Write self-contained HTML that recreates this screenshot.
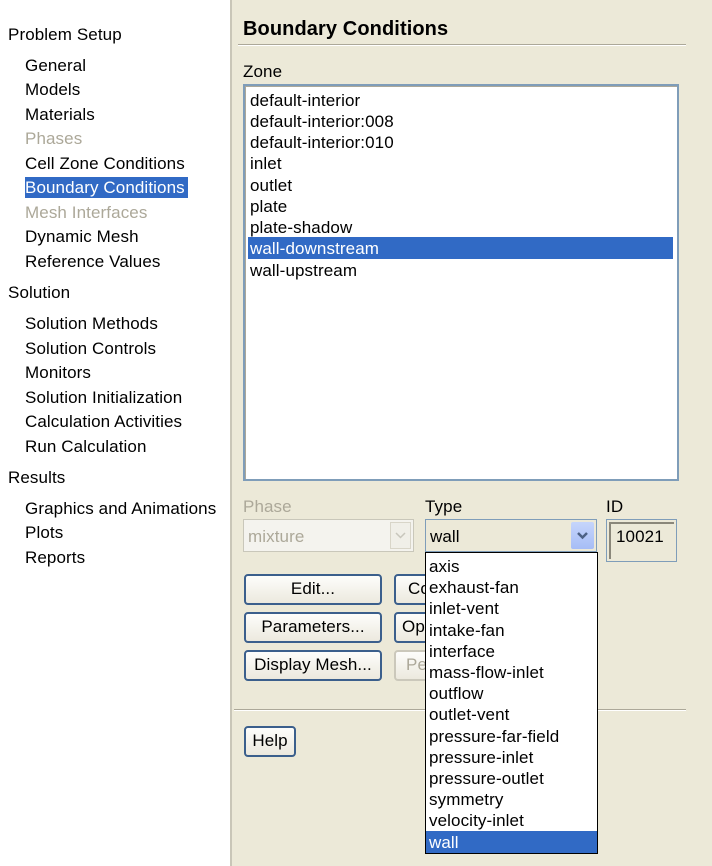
<!DOCTYPE html>
<html><head><style>
*{margin:0;padding:0;box-sizing:border-box}
body{width:712px;height:866px;overflow:hidden;background:#ECE9D8;font-family:"Liberation Sans",sans-serif;font-size:17px;letter-spacing:0.1px;color:#000;position:relative}
.a{position:absolute;white-space:nowrap}
#left{position:absolute;left:0;top:0;width:232px;height:866px;background:#fff;border-right:2px solid #c9c6b8}
.n{position:absolute;left:25px;line-height:21px;white-space:nowrap}
.h{left:8px}
.g{color:#aca899}
.li{position:absolute;left:250px;line-height:21px}
.btn{position:absolute;height:31px;border:2px solid #3b5f8c;border-radius:4px;background:linear-gradient(#fdfdfb,#ece9de);text-align:center;line-height:26px;white-space:nowrap;overflow:hidden}
.dd{position:absolute;left:429px;line-height:21px}
</style></head><body>
<div id="left">
<div class="n h" style="top:24px">Problem Setup</div>
<div class="n" style="top:55px">General</div>
<div class="n" style="top:79px">Models</div>
<div class="n" style="top:104px">Materials</div>
<div class="n g" style="top:128px">Phases</div>
<div class="n" style="top:153px">Cell Zone Conditions</div>
<div class="n" style="top:177px;background:#316ac5;color:#fff;left:25px;width:163px">Boundary Conditions</div>
<div class="n g" style="top:202px">Mesh Interfaces</div>
<div class="n" style="top:226px">Dynamic Mesh</div>
<div class="n" style="top:251px">Reference Values</div>
<div class="n h" style="top:282px">Solution</div>
<div class="n" style="top:313px">Solution Methods</div>
<div class="n" style="top:338px">Solution Controls</div>
<div class="n" style="top:362px">Monitors</div>
<div class="n" style="top:387px">Solution Initialization</div>
<div class="n" style="top:411px">Calculation Activities</div>
<div class="n" style="top:436px">Run Calculation</div>
<div class="n h" style="top:467px">Results</div>
<div class="n" style="top:498px">Graphics and Animations</div>
<div class="n" style="top:522px">Plots</div>
<div class="n" style="top:547px">Reports</div>
</div>

<div class="a" style="left:243px;top:18px;font-weight:bold;font-size:20px">Boundary Conditions</div>
<div class="a" style="left:238px;top:44px;width:448px;height:2px;background:#aca899;border-bottom:1px solid #fff"></div>
<div class="a" style="left:243px;top:62px">Zone</div>
<div class="a" style="left:243px;top:84px;width:436px;height:397px;border:2px solid #7f9db9;background:#fff;box-shadow:inset 1px 1px 0 #aca899"></div>
<div class="a" style="left:248px;top:237px;width:425px;height:22px;background:#316ac5"></div>
<div class="li" style="top:90px">default-interior</div>
<div class="li" style="top:111px">default-interior:008</div>
<div class="li" style="top:132px">default-interior:010</div>
<div class="li" style="top:153px">inlet</div>
<div class="li" style="top:175px">outlet</div>
<div class="li" style="top:196px">plate</div>
<div class="li" style="top:217px">plate-shadow</div>
<div class="li" style="top:238px;color:#fff">wall-downstream</div>
<div class="li" style="top:260px">wall-upstream</div>

<div class="a g" style="left:243px;top:497px">Phase</div>
<div class="a" style="left:243px;top:519px;width:171px;height:33px;border:1px solid #c9c7ba;background:#f4f3ee"></div>
<div class="a g" style="left:248px;top:527px">mixture</div>
<div class="a" style="left:390px;top:522px;width:21px;height:27px;border:1px solid #d8d5c8;background:#f0efe8"><svg width="19" height="25" viewBox="0 0 19 25"><path d="M5 10 L9.5 14.5 L14 10" fill="none" stroke="#c8c6bc" stroke-width="1.5"/></svg></div>

<div class="a" style="left:425px;top:497px">Type</div>
<div class="a" style="left:425px;top:519px;width:172px;height:33px;border:1px solid #7f9db9;background:#ECE9D8"></div>
<div class="a" style="left:430px;top:527px">wall</div>
<div class="a" style="left:571px;top:522px;width:23px;height:27px;background:linear-gradient(#c6d5fb,#a6bdf6);border-radius:2px"><svg width="23" height="27" viewBox="0 0 23 27"><path d="M7 11 L11.5 15.5 L16 11" fill="none" stroke="#4d6185" stroke-width="2.5"/></svg></div>

<div class="a" style="left:606px;top:497px">ID</div>
<div class="a" style="left:606px;top:519px;width:71px;height:43px;border:1px solid #7f9db9;background:#ECE9D8"><div style="position:absolute;left:2px;top:2px;width:65px;height:37px;border-left:2px solid #8a877a;border-top:2px solid #8a877a"></div></div>
<div class="a" style="left:616px;top:527px">10021</div>

<div class="btn" style="left:244px;top:574px;width:138px">Edit...</div>
<div class="btn" style="left:394px;top:574px;width:60px;text-align:left;padding-left:12px">Co</div>
<div class="btn" style="left:244px;top:612px;width:138px">Parameters...</div>
<div class="btn" style="left:394px;top:612px;width:60px;text-align:left;padding-left:6px">Op</div>
<div class="btn" style="left:244px;top:650px;width:138px">Display Mesh...</div>
<div class="btn" style="left:394px;top:650px;width:60px;text-align:left;padding-left:10px;border-color:#cbc8bb;color:#aca899">Pe</div>

<div class="a" style="left:234px;top:709px;width:452px;height:2px;background:#aca899;border-bottom:1px solid #fff"></div>
<div class="btn" style="left:244px;top:726px;width:52px;height:31px">Help</div>

<div class="a" style="left:425px;top:552px;width:173px;height:302px;border:1px solid #000;background:#fff"></div>
<div class="a" style="left:426px;top:831px;width:171px;height:22px;background:#316ac5"></div>
<div class="dd" style="top:556px">axis</div>
<div class="dd" style="top:577px">exhaust-fan</div>
<div class="dd" style="top:598px">inlet-vent</div>
<div class="dd" style="top:620px">intake-fan</div>
<div class="dd" style="top:641px">interface</div>
<div class="dd" style="top:662px">mass-flow-inlet</div>
<div class="dd" style="top:683px">outflow</div>
<div class="dd" style="top:704px">outlet-vent</div>
<div class="dd" style="top:726px">pressure-far-field</div>
<div class="dd" style="top:747px">pressure-inlet</div>
<div class="dd" style="top:768px">pressure-outlet</div>
<div class="dd" style="top:789px">symmetry</div>
<div class="dd" style="top:810px">velocity-inlet</div>
<div class="dd" style="top:832px;color:#fff">wall</div>
</body></html>
